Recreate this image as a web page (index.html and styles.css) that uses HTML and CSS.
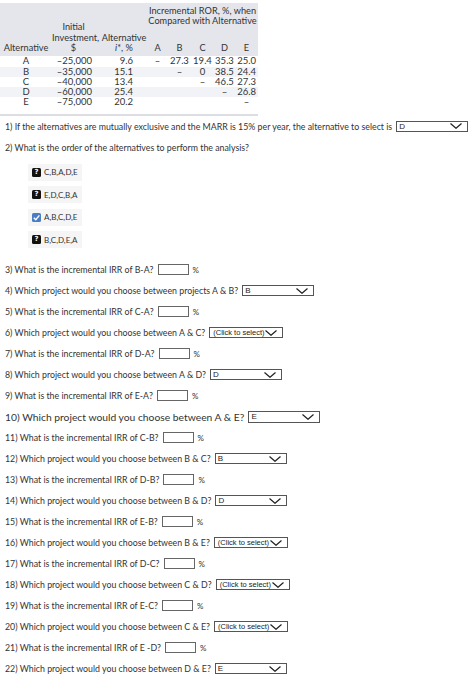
FILE: index.html
```html
<!DOCTYPE html>
<html>
<head>
<meta charset="utf-8">
<link rel="stylesheet" href="styles.css">
</head>
<body>
<table class="tbl">
  <colgroup>
    <col class="w1"><col class="w2"><col class="w3"><col class="wa"><col class="wb"><col class="wc"><col class="wd"><col class="we">
  </colgroup>
  <thead>
    <tr>
      <th rowspan="2" class="bot">Alternative</th>
      <th rowspan="2" class="bot h2">Initial<br>Investment,<br>$</th>
      <th rowspan="2" class="bot h3">Alternative<br><i>i</i>*, %</th>
      <th colspan="5" class="inc">Incremental ROR, %, when<br>Compared with Alternative</th>
    </tr>
    <tr class="letters"><th>A</th><th>B</th><th>C</th><th>D</th><th>E</th></tr>
  </thead>
  <tbody>
    <tr><td>A</td><td class="c2">–25,000</td><td class="c3">9.6</td><td>–</td><td>27.3</td><td>19.4</td><td>35.3</td><td>25.0</td></tr>
    <tr class="alt"><td>B</td><td class="c2">–35,000</td><td class="c3">15.1</td><td></td><td>–</td><td>0</td><td>38.5</td><td>24.4</td></tr>
    <tr><td>C</td><td class="c2">–40,000</td><td class="c3">13.4</td><td></td><td></td><td>–</td><td>46.5</td><td>27.3</td></tr>
    <tr class="alt"><td>D</td><td class="c2">–60,000</td><td class="c3">25.4</td><td></td><td></td><td></td><td>–</td><td>26.8</td></tr>
    <tr class="last"><td>E</td><td class="c2">–75,000</td><td class="c3">20.2</td><td></td><td></td><td></td><td></td><td>–</td></tr>
  </tbody>
</table>

<div class="q q1">1) If the alternatives are mutually exclusive and the MARR is 15% per year, the alternative to select is<span class="sel"><span class="v">D</span><svg class="chev" viewBox="0 0 12 6"><polyline points="0.5,0.5 6,5.3 11.5,0.5"/></svg></span></div>
<div class="q">2) What is the order of the alternatives to perform the analysis?</div>

<div class="opts">
  <div class="opt"><span class="ic q-ic">?</span>C,B,A,D,E</div>
  <div class="opt"><span class="ic q-ic">?</span>E,D,C,B,A</div>
  <div class="opt"><span class="ic ck-ic"><svg viewBox="0 0 10 10"><polyline points="2,5.2 4.2,7.4 8.2,2.6"/></svg></span>A,B,C,D,E</div>
  <div class="opt"><span class="ic q-ic">?</span>B,C,D,E,A</div>
</div>

<div class="list">
  <div class="q">3) What is the incremental IRR of B-A?<span class="inp"></span><span class="pct">%</span></div>
  <div class="q">4) Which project would you choose between projects A &amp; B?<span class="sel"><span class="v">B</span><svg class="chev" viewBox="0 0 12 6"><polyline points="0.5,0.5 6,5.3 11.5,0.5"/></svg></span></div>
  <div class="q">5) What is the incremental IRR of C-A?<span class="inp"></span><span class="pct">%</span></div>
  <div class="q">6) Which project would you choose between A &amp; C?<span class="sel cs"><span class="v">(Click to select)</span><svg class="chev" viewBox="0 0 12 6"><polyline points="0.5,0.5 6,5.3 11.5,0.5"/></svg></span></div>
  <div class="q">7) What is the incremental IRR of D-A?<span class="inp"></span><span class="pct">%</span></div>
  <div class="q">8) Which project would you choose between A &amp; D?<span class="sel"><span class="v">D</span><svg class="chev" viewBox="0 0 12 6"><polyline points="0.5,0.5 6,5.3 11.5,0.5"/></svg></span></div>
  <div class="q">9) What is the incremental IRR of E-A?<span class="inp"></span><span class="pct">%</span></div>
  <div class="q big">10) Which project would you choose between A &amp; E?<span class="sel"><span class="v">E</span><svg class="chev" viewBox="0 0 12 6"><polyline points="0.5,0.5 6,5.3 11.5,0.5"/></svg></span></div>
  <div class="q">11) What is the incremental IRR of C-B?<span class="inp"></span><span class="pct">%</span></div>
  <div class="q">12) Which project would you choose between B &amp; C?<span class="sel"><span class="v">B</span><svg class="chev" viewBox="0 0 12 6"><polyline points="0.5,0.5 6,5.3 11.5,0.5"/></svg></span></div>
  <div class="q">13) What is the incremental IRR of D-B?<span class="inp"></span><span class="pct">%</span></div>
  <div class="q">14) Which project would you choose between B &amp; D?<span class="sel"><span class="v">D</span><svg class="chev" viewBox="0 0 12 6"><polyline points="0.5,0.5 6,5.3 11.5,0.5"/></svg></span></div>
  <div class="q">15) What is the incremental IRR of E-B?<span class="inp"></span><span class="pct">%</span></div>
  <div class="q">16) Which project would you choose between B &amp; E?<span class="sel cs"><span class="v">(Click to select)</span><svg class="chev" viewBox="0 0 12 6"><polyline points="0.5,0.5 6,5.3 11.5,0.5"/></svg></span></div>
  <div class="q">17) What is the incremental IRR of D-C?<span class="inp"></span><span class="pct">%</span></div>
  <div class="q">18) Which project would you choose between C &amp; D?<span class="sel cs"><span class="v">(Click to select)</span><svg class="chev" viewBox="0 0 12 6"><polyline points="0.5,0.5 6,5.3 11.5,0.5"/></svg></span></div>
  <div class="q">19) What is the incremental IRR of E-C?<span class="inp"></span><span class="pct">%</span></div>
  <div class="q">20) Which project would you choose between C &amp; E?<span class="sel cs"><span class="v">(Click to select)</span><svg class="chev" viewBox="0 0 12 6"><polyline points="0.5,0.5 6,5.3 11.5,0.5"/></svg></span></div>
  <div class="q">21) What is the incremental IRR of E -D?<span class="inp"></span><span class="pct">%</span></div>
  <div class="q">22) Which project would you choose between D &amp; E?<span class="sel"><span class="v">E</span><svg class="chev" viewBox="0 0 12 6"><polyline points="0.5,0.5 6,5.3 11.5,0.5"/></svg></span></div>
</div>
</body>
</html>
```
FILE: styles.css
```css
body {
  margin: 0;
  font-family: Lato, "Open Sans", sans-serif;
  color: #333;
  font-size: 8.8px;
  background: #fff;
}
.tbl {
  margin-top: 3px;
  border-collapse: collapse;
  table-layout: fixed;
  width: 258px;
  font-size: 9.5px;
  line-height: 10.3px;
  border-bottom: 2px solid #dcdee3;
}
.w1 { width: 52px; }
.w2 { width: 46px; }
.w3 { width: 49px; }
.wa { width: 21px; }
.wb { width: 23px; }
.wc { width: 23px; }
.wd { width: 21px; }
.we { width: 23px; }
.tbl thead th {
  background: #e4e6ec;
  font-weight: normal;
  font-size: 9.2px;
  padding: 0;
  text-align: center;
  white-space: nowrap;
}
.tbl th.bot { vertical-align: bottom; padding-bottom: 3px; }
.tbl th.h2 { padding-right: 3px; }
.tbl th.h3 { padding-left: 3px; }
.tbl th.inc { vertical-align: top; padding-top: 3px; height: 37px; }
.tbl tr.letters th { padding-bottom: 3px; }
.tbl td {
  padding: 0;
  text-align: center;
  height: 10.3px;
  white-space: nowrap;
}
.tbl td.c2 { text-align: right; padding-right: 6px; }
.tbl td.c3 { text-align: right; padding-right: 14px; }
.tbl tr.alt td { background: #f2f3f6; }
.tbl tr.last td { padding-bottom: 6px; }

.q {
  height: 21px;
  display: flex;
  align-items: center;
  padding-left: 5px;
  white-space: pre;
}
.q.big { font-size: 10.3px; }
.sel {
  display: inline-flex;
  align-items: center;
  justify-content: space-between;
  width: 72px;
  height: 11px;
  box-sizing: border-box;
  border: 1px solid #555;
  padding: 0 5px 0 2px;
  margin-left: 4px;
  font-family: "Liberation Sans", Arial, sans-serif;
  font-size: 8px;
  color: #222;
  background: #fff;
}
.q.big .sel { height: 12px; }
.sel.cs { width: 74px; font-size: 7.5px; padding-left: 3px; }
.chev { width: 12px; height: 6px; }
.chev polyline { fill: none; stroke: #222; stroke-width: 1.2; }
.inp {
  display: inline-block;
  width: 31px;
  height: 11px;
  box-sizing: border-box;
  border: 1px solid #666;
  background: #fff;
  margin-left: 4px;
}
.pct { margin-left: 4px; font-size: 8px; }

.opts {
  padding-left: 28px;
  padding-top: 6px;
  padding-bottom: 11px;
  display: flex;
  flex-direction: column;
  gap: 5.5px;
}
.opt {
  width: 54px;
  height: 17px;
  box-sizing: border-box;
  background: #f5f5f6;
  display: flex;
  align-items: center;
  padding-left: 4px;
  font-size: 8px;
  color: #333;
}
.ic {
  width: 9px;
  height: 9px;
  border-radius: 1.5px;
  margin-right: 3px;
  display: flex;
  align-items: center;
  justify-content: center;
  flex: none;
}
.q-ic {
  background: #111;
  color: #fff;
  font-family: "DejaVu Sans", sans-serif;
  font-weight: bold;
  font-size: 7px;
  line-height: 9px;
}
.ck-ic { background: #4b7dc4; }
.ck-ic svg { width: 9px; height: 9px; }
.ck-ic polyline { fill: none; stroke: #fff; stroke-width: 1.6; }
```
